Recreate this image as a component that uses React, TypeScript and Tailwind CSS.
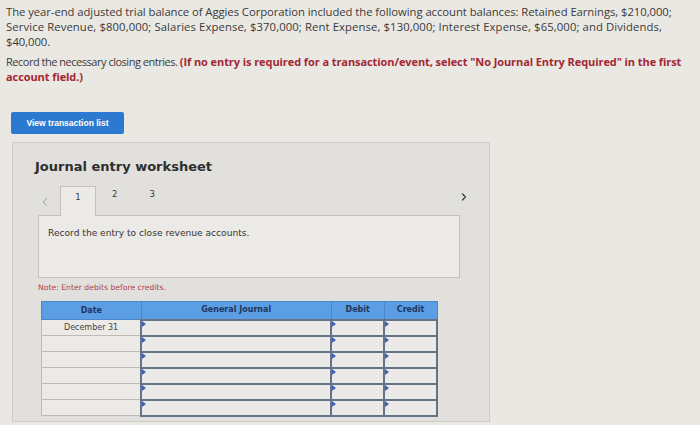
import { ChevronLeft, ChevronRight } from 'lucide-react'

const rows = ['December 31', '', '', '', '', '']

const InputCell = ({ w }: { w: string }) => (
  <td className={`relative p-0 border-2 border-[#66718c] bg-[#ebeae6] ${w}`}>
    <span className="absolute left-0 top-0 w-0 h-0 border-t-[3px] border-b-[3px] border-l-[4px] border-t-transparent border-b-transparent border-l-[#3d63b8]" />
  </td>
)

const App = () => {
  return (
    <div className="w-[700px] h-[425px] overflow-hidden bg-[#eae8e3] text-[#3a3a3a] font-['Open_Sans',sans-serif]">
      <div className="px-[6px] pt-[4px] text-[11.3px] leading-[15px] whitespace-nowrap">
        <p className="tracking-[-0.06px]">
          The year-end adjusted trial balance of Aggies Corporation included the following account balances: Retained Earnings, $210,000;
          <br />
          <span className="tracking-[0.1px]">
            Service Revenue, $800,000; Salaries Expense, $370,000; Rent Expense, $130,000; Interest Expense, $65,000; and Dividends,
          </span>
          <br />
          $40,000.
        </p>
        <p className="mt-[5px] text-[11px] tracking-[-0.48px]">
          Record the necessary closing entries.{' '}
          <span className="font-bold text-[#a32734] tracking-[-0.08px]">
            (If no entry is required for a transaction/event, select "No Journal Entry Required" in the first
          </span>
          <br />
          <span className="font-bold text-[#a32734] tracking-[-0.08px]">account field.)</span>
        </p>
      </div>

      <button className="block ml-[11px] mt-[28px] w-[113px] h-[22px] rounded-[2px] bg-[#2b7ad0] text-white text-[8.5px] font-bold font-['Liberation_Sans',sans-serif]">
        View transaction list
      </button>

      <div className="ml-[12px] mt-[8px] w-[478px] h-[280px] bg-[#e1e0dc] border border-[#cfcdc8] pl-[25px] pt-[14px]">
        <h2 className="ml-[-3px] text-[13px] font-bold text-[#2e2e2e] font-['DejaVu_Sans',sans-serif]">
          Journal entry worksheet
        </h2>

        <div className="mt-[9px] w-[432px] flex items-end font-['DejaVu_Sans',sans-serif] text-[8.5px] text-[#3a3a3a]">
          <ChevronLeft className="w-[14px] h-[14px] mb-[6px] text-[#8a8a8a]" strokeWidth={1.5} />
          <div className="ml-[8px] w-[36px] h-[30px] bg-[#ebeae6] border border-b-0 border-[#c4c2bd] flex justify-center pt-[4px] relative z-10 -mb-px">
            1
          </div>
          <span className="ml-[16px] mb-[14px]">2</span>
          <span className="ml-[32px] mb-[14px]">3</span>
          <ChevronRight className="ml-auto w-[12px] h-[12px] mb-[12px] text-[#3a3a3a]" strokeWidth={2.5} />
        </div>

        <div className="w-[422px] h-[63px] bg-[#ebeae6] border border-[#c4c2bd] pl-[9px] pt-[11px] text-[9.1px] text-[#333] font-['DejaVu_Sans',sans-serif]">
          Record the entry to close revenue accounts.
        </div>

        <p className="mt-[4px] text-[7.7px] text-[#b0424e] font-['DejaVu_Sans',sans-serif]">Note: Enter debits before credits.</p>

        <table className="mt-[8px] ml-[3px] w-[397px] border-collapse text-[8px] font-['DejaVu_Sans',sans-serif]">
          <thead>
            <tr className="h-[18px] bg-[#5b9ee4] text-[#1f3561]">
              <th className="w-[100px] font-bold border border-[#4a86c9]">Date</th>
              <th className="w-[191px] font-bold border border-[#4a86c9]">General Journal</th>
              <th className="w-[53px] font-bold border border-[#4a86c9]">Debit</th>
              <th className="w-[53px] font-bold border border-[#4a86c9]">Credit</th>
            </tr>
          </thead>
          <tbody>
            {rows.map((d, i) => (
              <tr key={i} className="h-[16px]">
                <td className="border border-[#bdbbb6] bg-[#ebeae6] text-center text-[#444]">{d}</td>
                <InputCell w="w-[191px]" />
                <InputCell w="w-[53px]" />
                <InputCell w="w-[53px]" />
              </tr>
            ))}
          </tbody>
        </table>
      </div>
    </div>
  )
}

export default App
